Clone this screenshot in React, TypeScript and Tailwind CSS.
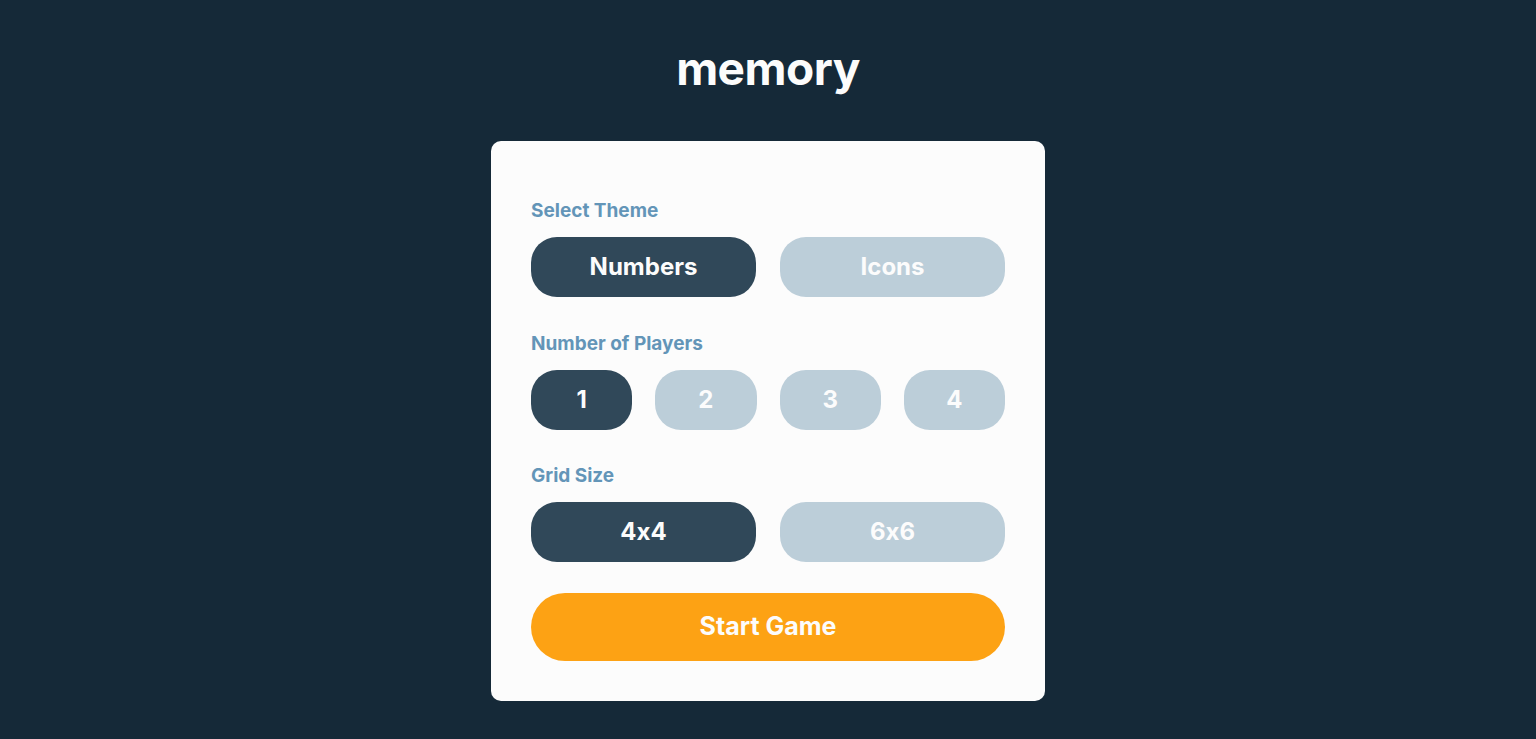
import React, { useState } from "react";

const font = { fontFamily: "Inter, 'Liberation Sans', sans-serif", fontFeatureSettings: "'calt' 0" };

function Label({ children }: { children: React.ReactNode }) {
  return (
    <div className="text-[19px] leading-[24px] font-bold text-[#6395b8] mb-[14px]">{children}</div>
  );
}

function Opt({
  active,
  children,
  onClick,
}: {
  active: boolean;
  children: React.ReactNode;
  onClick: () => void;
}) {
  return (
    <button
      onClick={onClick}
      className={
        "h-[60px] rounded-[26px] text-[24px] font-bold text-[#fcfcfc] flex items-center justify-center " +
        (active ? "bg-[#304859]" : "bg-[#bcced9]")
      }
    >
      {children}
    </button>
  );
}

export default function App() {
  const [theme, setTheme] = useState(0);
  const [players, setPlayers] = useState(1);
  const [grid, setGrid] = useState(4);
  return (
    <div className="min-h-screen bg-[#152938] flex flex-col items-center" style={font}>
      <h1 className="mt-[40px] text-[46px] leading-[56px] font-bold text-[#fcfcfc] tracking-[-0.5px]">
        memory
      </h1>
      <div className="mt-[45px] w-[554px] bg-[#fcfcfc] rounded-[10px] px-10 pt-[58px] pb-10 flex flex-col">
        <Label>Select Theme</Label>
        <div className="grid grid-cols-2 gap-6">
          <Opt active={theme === 0} onClick={() => setTheme(0)}>Numbers</Opt>
          <Opt active={theme === 1} onClick={() => setTheme(1)}>Icons</Opt>
        </div>
        <div className="mt-[35px]">
          <Label>Number of Players</Label>
          <div className="grid grid-cols-4 gap-[23px]">
            {[1, 2, 3, 4].map((n) => (
              <Opt key={n} active={players === n} onClick={() => setPlayers(n)}>
                {n}
              </Opt>
            ))}
          </div>
        </div>
        <div className="mt-[34px]">
          <Label>Grid Size</Label>
          <div className="grid grid-cols-2 gap-6">
            <Opt active={grid === 4} onClick={() => setGrid(4)}>4x4</Opt>
            <Opt active={grid === 6} onClick={() => setGrid(6)}>6x6</Opt>
          </div>
        </div>
        <button className="mt-[31px] h-[68px] rounded-[35px] bg-[#fda214] text-[#fcfcfc] text-[25px] font-bold">
          Start Game
        </button>
      </div>
    </div>
  );
}
